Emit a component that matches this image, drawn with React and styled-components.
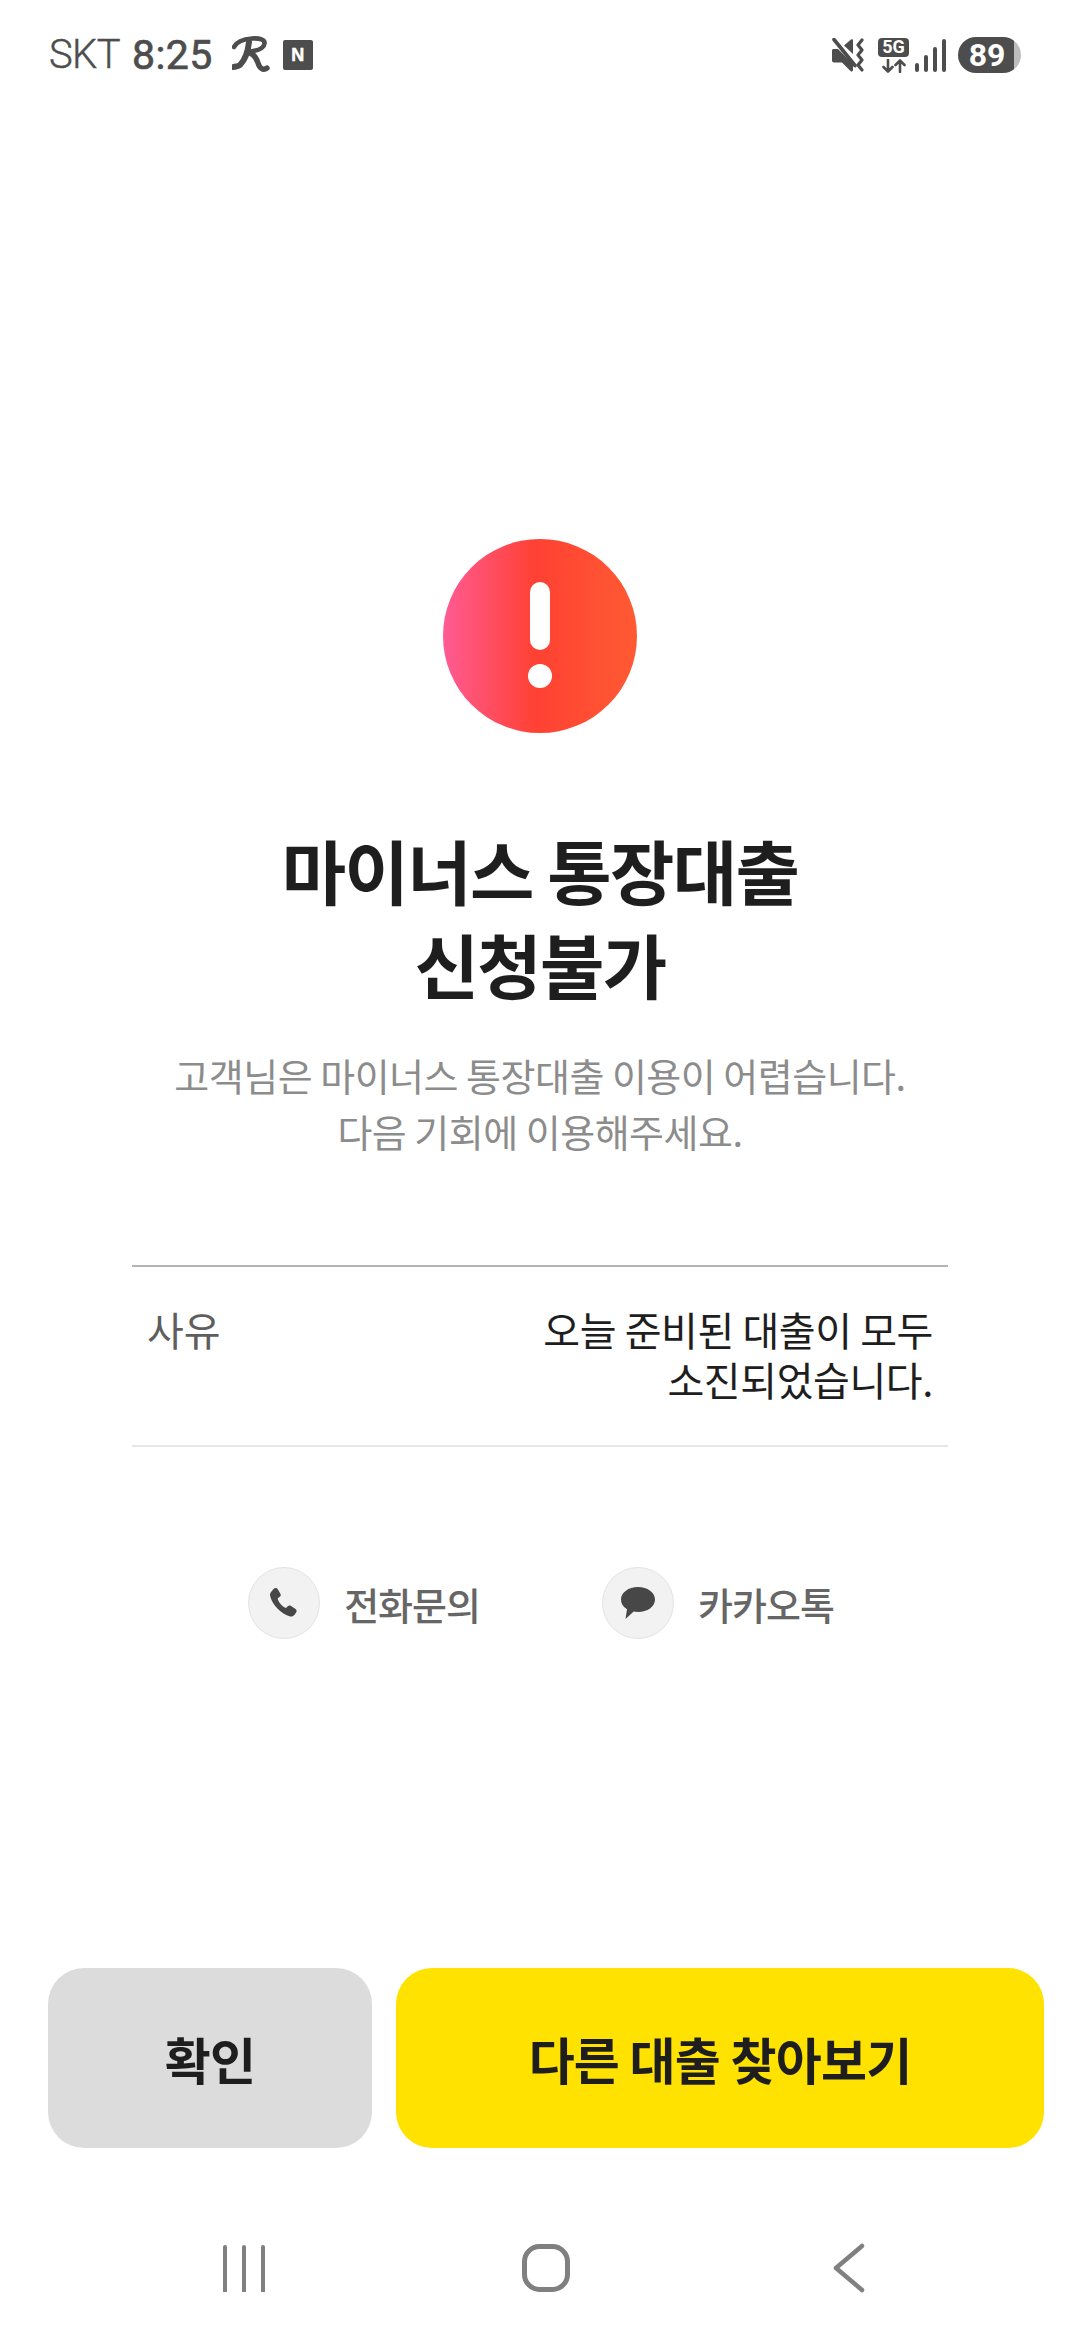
import React from "react";
import styled, { createGlobalStyle } from "styled-components";

const Global = createGlobalStyle`
  html, body { margin: 0; padding: 0; background: #fff; }
  * { box-sizing: border-box; }
  body { font-family: "Noto Sans CJK KR", "Noto Sans", sans-serif; }
`;

const Page = styled.div`
  width: 1080px;
  height: 2340px;
  display: flex;
  flex-direction: column;
  background: #fff;
  overflow: hidden;
`;

const StatusBar = styled.header`
  height: 110px;
  flex: none;
  display: flex;
  align-items: center;
  justify-content: space-between;
  padding: 0 59px 0 49px;
  color: #4d4d4d;
`;

const StatusGroup = styled.div`
  display: flex;
  align-items: center;
`;

const Carrier = styled.span`
  font-family: Roboto, sans-serif;
  font-size: 40px;
  font-weight: 300;
  line-height: 1;
  letter-spacing: -0.6px;
  -webkit-text-stroke: 0.4px #4d4d4d;
`;

const Clock = styled.span`
  font-family: Roboto, sans-serif;
  font-size: 41px;
  font-weight: 400;
  line-height: 1;
  margin-left: 12px;
  letter-spacing: 0.4px;
  -webkit-text-stroke: 0.7px #4d4d4d;
`;

const NBadge = styled.span`
  width: 30px;
  height: 30px;
  margin-left: 13px;
  border-radius: 2px;
  background: #4d4d4d;
  color: #fff;
  display: flex;
  align-items: center;
  justify-content: center;
  font-family: "Liberation Sans", sans-serif;
  font-weight: 700;
  font-size: 18px;
  line-height: 1;
  -webkit-text-stroke: 0.5px #fff;
`;

const Battery = styled.span`
  width: 63px;
  height: 36px;
  margin-left: 12px;
  border-radius: 18px;
  background: linear-gradient(90deg, #4d4d4d 0 89%, #bdbdbd 89% 100%);
  color: #fff;
  display: flex;
  align-items: center;
  justify-content: center;
  padding-right: 5px;
  font-family: Roboto, sans-serif;
  font-weight: 700;
  font-size: 32px;
  line-height: 1;
`;

const Main = styled.main`
  flex: 1;
  display: flex;
  flex-direction: column;
  align-items: center;
  padding-top: 429px;
`;

const Title = styled.h1`
  margin: 90px 0 0;
  font-size: 70px;
  line-height: 94px;
  font-weight: 700;
  color: #1e1e1e;
  text-align: center;
  letter-spacing: -1.6px;
`;

const Subtitle = styled.p`
  margin: 36px 0 0;
  font-size: 38px;
  line-height: 56px;
  font-weight: 400;
  color: #8c8c8c;
  text-align: center;
  letter-spacing: -0.5px;
`;

const ReasonTable = styled.div`
  width: 816px;
  margin-top: 106px;
  height: 182px;
  border-top: 2px solid #b4b4b4;
  border-bottom: 2px solid #e6e6e6;
  display: flex;
  justify-content: space-between;
  align-items: flex-start;
  padding: 37px 15px 0 15px;
  font-size: 40px;
  line-height: 50px;
`;

const ReasonLabel = styled.span`
  color: #5e5e5e;
`;

const ReasonValue = styled.span`
  color: #1e1e1e;
  text-align: right;
  letter-spacing: -0.4px;
`;

const Contacts = styled.div`
  margin-top: 120px;
  display: flex;
  gap: 122px;
  padding-left: 2px;
`;

const Contact = styled.div`
  display: flex;
  align-items: center;
  gap: 24px;
  font-size: 38px;
  font-weight: 500;
  color: #666;
  letter-spacing: -1px;
`;

const ContactIcon = styled.span`
  width: 72px;
  height: 72px;
  border-radius: 50%;
  background: #f2f2f2;
  border: 1.5px solid #e3e3e3;
  display: flex;
  align-items: center;
  justify-content: center;
`;

const Actions = styled.div`
  flex: none;
  display: flex;
  gap: 24px;
  padding: 0 36px 0 48px;
  height: 180px;
`;

const ActionButton = styled.button`
  flex: ${(p) => (p.$primary ? "1" : "none")};
  width: ${(p) => (p.$primary ? "auto" : "324px")};
  border: 0;
  border-radius: 36px;
  background: ${(p) => (p.$primary ? "#ffe200" : "#dcdcdc")};
  color: #1e1e1e;
  font-family: inherit;
  font-size: 50px;
  font-weight: 700;
  letter-spacing: -0.8px;
`;

const NavBar = styled.nav`
  flex: none;
  height: 192px;
  display: flex;
  align-items: center;
  padding: 48px 0 0 220px;
  gap: 254px;
`;

const Muted = () => (
  <svg width="34" height="34" viewBox="0 0 34 34" fill="#4d4d4d">
    <path d="M1 12.500c0-1 .7-1.600 1.600-1.600H7l15 15v6c0 1.400-1.500 2-2.500 1L11 24.500H3c-1.200 0-2-.8-2-2z" />
    <path d="M13 7.500L20 1.500c1-.7 2-.2 2 1V16z" />
    <path d="M3 1.500l21 26" stroke="#4d4d4d" strokeWidth="3.600" strokeLinecap="round" />
    <path d="M31 2l-4 5 4 5-4 5 4 5-4 5 4 5" fill="none" stroke="#4d4d4d" strokeWidth="3.200" strokeLinecap="round" strokeLinejoin="round" />
  </svg>
);

const FiveG = styled.span`
  width: 31px;
  height: 19px;
  border-radius: 4px;
  background: #4d4d4d;
  color: #fff;
  display: flex;
  align-items: center;
  justify-content: center;
  font-family: Roboto, sans-serif;
  font-size: 18px;
  font-weight: 700;
  line-height: 1;
`;

const NetStack = styled.span`
  display: flex;
  flex-direction: column;
  align-items: center;
  gap: 2px;
  margin-left: 13px;
`;

const Arrows = () => (
  <svg width="24" height="14" viewBox="0 0 24 14" fill="none" stroke="#4d4d4d" strokeWidth="2.600" strokeLinecap="round" strokeLinejoin="round">
    <path d="M6 1v11M1.500 8l4.500 4.500L10.500 8" />
    <path d="M18 13V2M13.500 6L18 1.500 22.500 6" />
  </svg>
);

const Signal = () => (
  <svg width="31" height="34" viewBox="0 0 31 34" style={{ marginLeft: 6 }} fill="#4d4d4d">
    <rect x="0" y="25" width="4" height="9" rx="2" />
    <rect x="9" y="17" width="4" height="17" rx="2" />
    <rect x="18" y="9" width="4" height="25" rx="2" />
    <rect x="27" y="1" width="4" height="33" rx="2" />
  </svg>
);

const ScriptR = () => (
  <svg width="38" height="38" viewBox="0 0 38 38" style={{ marginLeft: 19 }} fill="none" stroke="#4d4d4d" strokeLinecap="round" strokeLinejoin="round">
    <path d="M2 11C5 5 12 3 20 2.500c8-.5 13 1 12.500 5C32 12 25 15 15 16" strokeWidth="4.600" />
    <path d="M17 6C16 15 13 24 8 29c-2 2-4 1-6.500 2" strokeWidth="6" />
    <path d="M15 16c6 1 9 5 11 11 1.500 5 5 8 9 5" strokeWidth="5.400" />
  </svg>
);

const Alert = () => (
  <svg width="194" height="194" viewBox="0 0 194 194" style={{ display: "block" }}>
    <defs>
      <linearGradient id="alertFill" x1="0" y1="0" x2="1" y2="0">
        <stop offset="0" stopColor="#ff5b93" />
        <stop offset="0.48" stopColor="#ff4133" />
        <stop offset="1" stopColor="#ff5a33" />
      </linearGradient>
    </defs>
    <circle cx="97" cy="97" r="97" fill="url(#alertFill)" />
    <rect x="87" y="43" width="20" height="68" rx="10" fill="#fff" />
    <circle cx="97" cy="137" r="12" fill="#fff" />
  </svg>
);

const Phone = () => (
  <svg width="30" height="32" viewBox="0 0 30 32" fill="#474747">
    <path d="M5 1.500c1.500-1 3-.7 3.800.7l2.600 4.600c.6 1.100.4 2.300-.6 3l-1.600 1.200c-.5.400-.6.900-.4 1.400 1.500 3.400 4 6.400 7.300 8.300.5.300 1 .200 1.400-.2l1.500-1.400c.9-.8 2.100-.9 3.100-.2l4.400 3c1.300.9 1.500 2.400.6 3.600l-1.600 2.200c-1 1.400-2.600 2.100-4.300 1.700C12 27 3.700 18.500 1.200 9.300.7 7.500 1.200 5.800 2.500 4.500z" />
  </svg>
);

const Bubble = () => (
  <svg width="36" height="34" viewBox="0 0 36 34" fill="#474747">
    <path d="M18 1c9.500 0 17 5.500 17 12.500S27.500 26 18 26c-1.500 0-3-.1-4.300-.4L5.500 33l1.500-9.700C3 21 1 17.500 1 13.500 1 6.500 8.500 1 18 1z" />
  </svg>
);

const NavMenu = () => (
  <svg width="48" height="48" viewBox="0 0 48 48" stroke="#808080" strokeWidth="4" strokeLinecap="round">
    <path d="M5 3v44M24 3v44M43 3v44" />
  </svg>
);

const NavHome = () => (
  <svg width="48" height="48" viewBox="0 0 48 48" fill="none" stroke="#808080" strokeWidth="5">
    <rect x="2.500" y="2.500" width="43" height="43" rx="15" />
  </svg>
);

const NavBack = () => (
  <svg width="48" height="50" viewBox="0 0 48 50" fill="none" stroke="#808080" strokeWidth="4.500" strokeLinecap="round" strokeLinejoin="round">
    <path d="M38 3L12 25l26 22" />
  </svg>
);

export default function App() {
  return (
    <Page>
      <Global />
      <StatusBar>
        <StatusGroup>
          <Carrier>SKT</Carrier>
          <Clock>8:25</Clock>
          <ScriptR />
          <NBadge>N</NBadge>
        </StatusGroup>
        <StatusGroup>
          <Muted />
          <NetStack>
            <FiveG>5G</FiveG>
            <Arrows />
          </NetStack>
          <Signal />
          <Battery>89</Battery>
        </StatusGroup>
      </StatusBar>
      <Main>
        <Alert />
        <Title>
          마이너스 통장대출
          <br />
          신청불가
        </Title>
        <Subtitle>
          고객님은 마이너스 통장대출 이용이 어렵습니다.
          <br />
          다음 기회에 이용해주세요.
        </Subtitle>
        <ReasonTable>
          <ReasonLabel>사유</ReasonLabel>
          <ReasonValue>
            오늘 준비된 대출이 모두
            <br />
            소진되었습니다.
          </ReasonValue>
        </ReasonTable>
        <Contacts>
          <Contact>
            <ContactIcon>
              <Phone />
            </ContactIcon>
            전화문의
          </Contact>
          <Contact>
            <ContactIcon>
              <Bubble />
            </ContactIcon>
            카카오톡
          </Contact>
        </Contacts>
      </Main>
      <Actions>
        <ActionButton>확인</ActionButton>
        <ActionButton $primary>다른 대출 찾아보기</ActionButton>
      </Actions>
      <NavBar>
        <NavMenu />
        <NavHome />
        <NavBack />
      </NavBar>
    </Page>
  );
}
